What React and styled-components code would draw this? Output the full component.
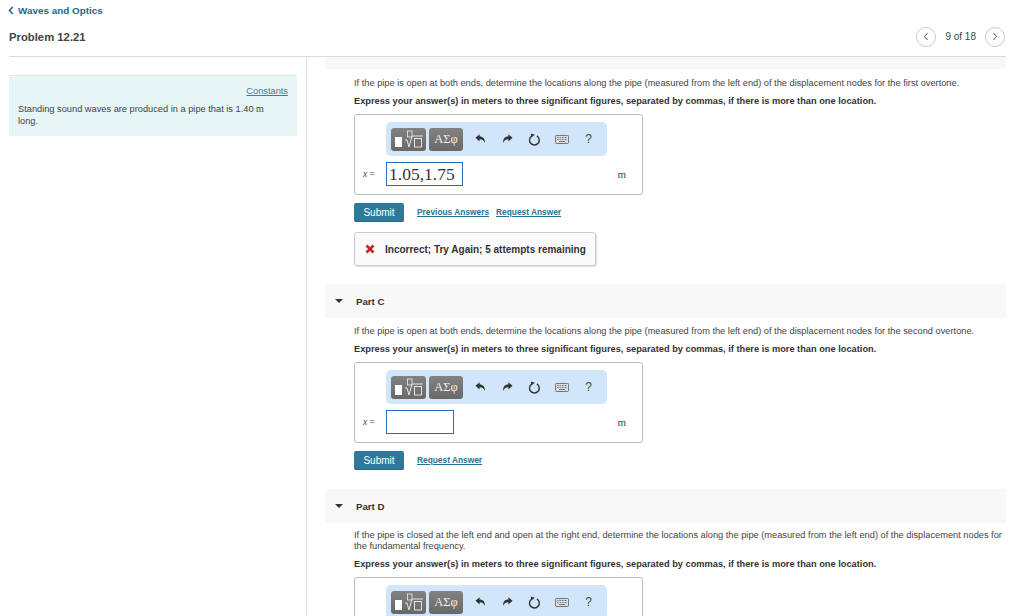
import React from "react";
import styled, { createGlobalStyle } from "styled-components";

const Global = createGlobalStyle`
  html, body { margin: 0; padding: 0; background: #fff; height: 616px; overflow: hidden; }
  body { font-family: "Liberation Sans", Arial, sans-serif; color: #333; }
`;
const Page = styled.div`width: 1024px; height: 616px; overflow: hidden; padding: 0 18px 0 9px; box-sizing: border-box;`;
const Header = styled.header`height: 56px; border-bottom: 1px solid #dcdcdc; display: flex; flex-direction: column; box-sizing: content-box;`;
const Back = styled.a`display: flex; align-items: center; gap: 4px; height: 11px; margin-top: 5px; margin-left: -1px; color: #22688a; font-size: 9.9px; font-weight: bold;`;
const TitleRow = styled.div`display: flex; align-items: center; justify-content: space-between; margin-top: 10px; height: 21px;`;
const Title = styled.h1`margin: 0; font-size: 11.3px; font-weight: bold; color: #444;`;
const Pager = styled.div`display: flex; align-items: center; gap: 9px; font-size: 10px; color: #444; margin-right: 1px;`;
const Circle = styled.span`width: 20px; height: 20px; border: 1px solid #ccc; border-radius: 50%; box-sizing: border-box; display: flex; align-items: center; justify-content: center;`;
const Body = styled.div`display: grid; grid-template-columns: 297px 1fr; height: 559px;`;
const Side = styled.aside`border-right: 1px solid #d8deea; padding-top: 18px; box-sizing: border-box; width: 298px; height: 559px;`;
const Info = styled.div`width: 288px; height: 61px; background: #e6f5f6; border-top: 1px solid #dfe8e8; box-sizing: border-box; padding: 9px 9px 0; font-size: 9.25px; line-height: 12px; color: #444;`;
const Constants = styled.a`display: block; text-align: right; color: #3b7f9f; text-decoration: underline; margin-bottom: 6px;`;
const InfoText = styled.p`margin: 0; width: 252px;`;
const Serif = styled.span`font-family: "Liberation Serif", serif; font-size: 10px;`;
const Main = styled.main`margin-left: 19px; min-width: 0; width: 681px;`;
const Strip = styled.div`height: 12px; background: #f8f8f8;`;
const Section = styled.section`padding-left: 29px;`;
const Prompt = styled.p`margin: 0; font-size: 9.25px; line-height: 11px; color: #444; padding-top: ${p => p.$top}px;`;
const Express = styled.p`margin: 0; font-size: 9.25px; line-height: 11px; font-weight: bold; color: #333; padding-top: 7px;`;
const AnswerBox = styled.div`width: 289px; height: 81px; margin-top: 7px; border: 1px solid #bbb; border-radius: 3px; box-sizing: border-box; padding: 7px 0 0 31px; background: #fff;`;
const Toolbar = styled.div`width: 221px; height: 34px; background: #d1e5fb; border-radius: 5px; box-sizing: border-box; padding: 5px; display: flex; align-items: center;`;
const TemplateBtn = styled.span`width: 35px; height: 23px; margin-right: 3px; background: linear-gradient(#828282, #686868); border-radius: 3px; display: flex; align-items: center; justify-content: center; color: #eee; font-family: "Liberation Serif", serif; font-size: 12.5px; flex: none;`;
const SymBtn = styled(TemplateBtn)`width: 34px; margin-right: 4px;`;
const ToolIcon = styled.span`width: 27.25px; display: flex; justify-content: center; align-items: center; color: #444; font-size: 12px;`;
const InputRow = styled.div`display: flex; align-items: center; margin: 6px 0 0 -23px;`;
const VarLabel = styled.span`width: 23px; font-family: "Liberation Serif", serif; font-size: 9.5px; color: #444; margin-left: -1px; padding-left: 1px; box-sizing: content-box; white-space: nowrap;`;
const Input = styled.div`width: ${p => p.$w}px; height: 24px; border: 1px solid #2e6bc0; box-sizing: border-box; font-family: "Liberation Serif", serif; font-size: 17.5px; line-height: 22px; padding-left: 2px; color: #333;`;
const Unit = styled.span`margin-left: auto; margin-right: 16px; font-family: "Liberation Serif", serif; font-size: 11px; color: #444;`;
const Actions = styled.div`display: flex; align-items: flex-start; margin-top: 8px; height: 19px;`;
const Submit = styled.button`width: 50px; height: 19px; padding: 0; background: #2f7a9c; color: #fff; border: 0; border-bottom: 1px solid #256784; border-radius: 2px; font: 10px "Liberation Sans", Arial, sans-serif; margin-right: 13px;`;
const ActionLink = styled.a`color: #2a7293; font-size: 8.35px; font-weight: bold; text-decoration: underline; margin-right: 7px; line-height: 18px;`;
const Feedback = styled.div`width: 242px; height: 34px; margin-top: 10px; background: #fafafa; border: 1px solid #ccc; border-radius: 3px; box-shadow: 1px 1px 1px #ddd; box-sizing: border-box; display: flex; align-items: center; padding-left: 10px; gap: 10px; font-size: 10px; font-weight: bold; color: #333;`;
const PartHead = styled.div`height: 34px; margin-top: ${p => p.$top}px; background: #f8f8f8; display: flex; align-items: center; font-size: 9.7px; font-weight: bold; color: #333;`;
const Caret = styled.span`width: 0; height: 0; border-left: 4px solid transparent; border-right: 4px solid transparent; border-top: 4px solid #333; margin: 0 13px 0 10px;`;

const Undo = ({ flip }) => (
  <svg width="11" height="10" viewBox="0 0 11 10" style={flip ? { transform: "scaleX(-1)" } : undefined}>
    <path d="M0.5 3.8 L4.6 0.3 V2.5 C8 2.5 10.2 4.6 9.8 9 C9 6.6 7.6 5.4 4.6 5.3 V7.4 Z" fill="#333" />
  </svg>
);
const Reload = () => (
  <svg width="13" height="13" viewBox="0 0 13 13">
    <path d="M8.9 2.9 A4.9 4.9 0 1 1 3.9 2.9" fill="none" stroke="#333" strokeWidth="1.4" />
    <path d="M2.8 0.4 L6.8 1.8 L3.4 4.6 Z" fill="#333" />
  </svg>
);
const Keys = () => (
  <svg width="14" height="9" viewBox="0 0 14 9">
    <rect x="0.5" y="0.5" width="13" height="8" rx="0.8" fill="#d8dde4" stroke="#777" />
    <path d="M2 2.5h10M2 4.5h10" stroke="#777" strokeDasharray="1 .6" />
    <path d="M4 6.5h6" stroke="#777" />
  </svg>
);
const Template = () => (
  <svg width="30" height="18" viewBox="0 0 30 18">
    <rect x="1" y="7" width="7" height="10" fill="#fff" />
    <rect x="13.5" y="1" width="4.5" height="6" fill="none" stroke="#eee" strokeWidth=".8" />
    <path d="M11 10 L13 10 L15 17 L18 6 H29" fill="none" stroke="#eee" strokeWidth=".9" />
    <rect x="20.5" y="8.5" width="7" height="8.5" fill="none" stroke="#eee" strokeWidth=".9" />
  </svg>
);

const Answer = ({ value, w, clipped }) => (
  <AnswerBox>
    <Toolbar>
      <TemplateBtn><Template /></TemplateBtn>
      <SymBtn>ΑΣφ</SymBtn>
      <ToolIcon><Undo /></ToolIcon>
      <ToolIcon><Undo flip /></ToolIcon>
      <ToolIcon><Reload /></ToolIcon>
      <ToolIcon><Keys /></ToolIcon>
      <ToolIcon>?</ToolIcon>
    </Toolbar>
    {!clipped && (
      <InputRow>
        <VarLabel><i>x</i> =</VarLabel>
        <Input $w={w}>{value}</Input>
        <Unit>m</Unit>
      </InputRow>
    )}
  </AnswerBox>
);

const EXPRESS = "Express your answer(s) in meters to three significant figures, separated by commas, if there is more than one location.";

export default function App() {
  return (
    <Page>
      <Global />
      <Header>
        <Back>
          <svg width="6" height="9" viewBox="0 0 6 9"><path d="M4.8 1 L1.5 4.5 L4.8 8" fill="none" stroke="#22688a" strokeWidth="1.6" /></svg>
          Waves and Optics
        </Back>
        <TitleRow>
          <Title>Problem 12.21</Title>
          <Pager>
            <Circle><svg width="6" height="9" viewBox="0 0 6 9"><path d="M4.5 1 L1.5 4.5 L4.5 8" fill="none" stroke="#555" /></svg></Circle>
            <span>9 of 18</span>
            <Circle><svg width="6" height="9" viewBox="0 0 6 9"><path d="M1.5 1 L4.5 4.5 L1.5 8" fill="none" stroke="#555" /></svg></Circle>
          </Pager>
        </TitleRow>
      </Header>
      <Body>
        <Side>
          <Info>
            <Constants>Constants</Constants>
            <InfoText>Standing sound waves are produced in a pipe that is 1.40 <Serif>m</Serif> long.</InfoText>
          </Info>
        </Side>
        <Main>
          <Strip />
          <Section>
            <Prompt $top={9}>If the pipe is open at both ends, determine the locations along the pipe (measured from the left end) of the displacement nodes for the first overtone.</Prompt>
            <Express>{EXPRESS}</Express>
            <Answer value="1.05,1.75" w={77} />
            <Actions>
              <Submit>Submit</Submit>
              <ActionLink>Previous Answers</ActionLink>
              <ActionLink>Request Answer</ActionLink>
            </Actions>
            <Feedback>
              <svg width="10" height="10" viewBox="0 0 10 10"><path d="M1.5 1.5 L8.5 8.5 M8.5 1.5 L1.5 8.5" stroke="#c5232a" strokeWidth="2.6" /></svg>
              Incorrect; Try Again; 5 attempts remaining
            </Feedback>
          </Section>
          <PartHead $top={18}><Caret />Part C</PartHead>
          <Section>
            <Prompt $top={8}>If the pipe is open at both ends, determine the locations along the pipe (measured from the left end) of the displacement nodes for the second overtone.</Prompt>
            <Express>{EXPRESS}</Express>
            <Answer w={68} />
            <Actions>
              <Submit>Submit</Submit>
              <ActionLink>Request Answer</ActionLink>
            </Actions>
          </Section>
          <PartHead $top={19}><Caret />Part D</PartHead>
          <Section>
            <Prompt $top={7}>If the pipe is closed at the left end and open at the right end, determine the locations along the pipe (measured from the left end) of the displacement nodes for the fundamental frequency.</Prompt>
            <Express>{EXPRESS}</Express>
            <Answer clipped />
          </Section>
        </Main>
      </Body>
    </Page>
  );
}
